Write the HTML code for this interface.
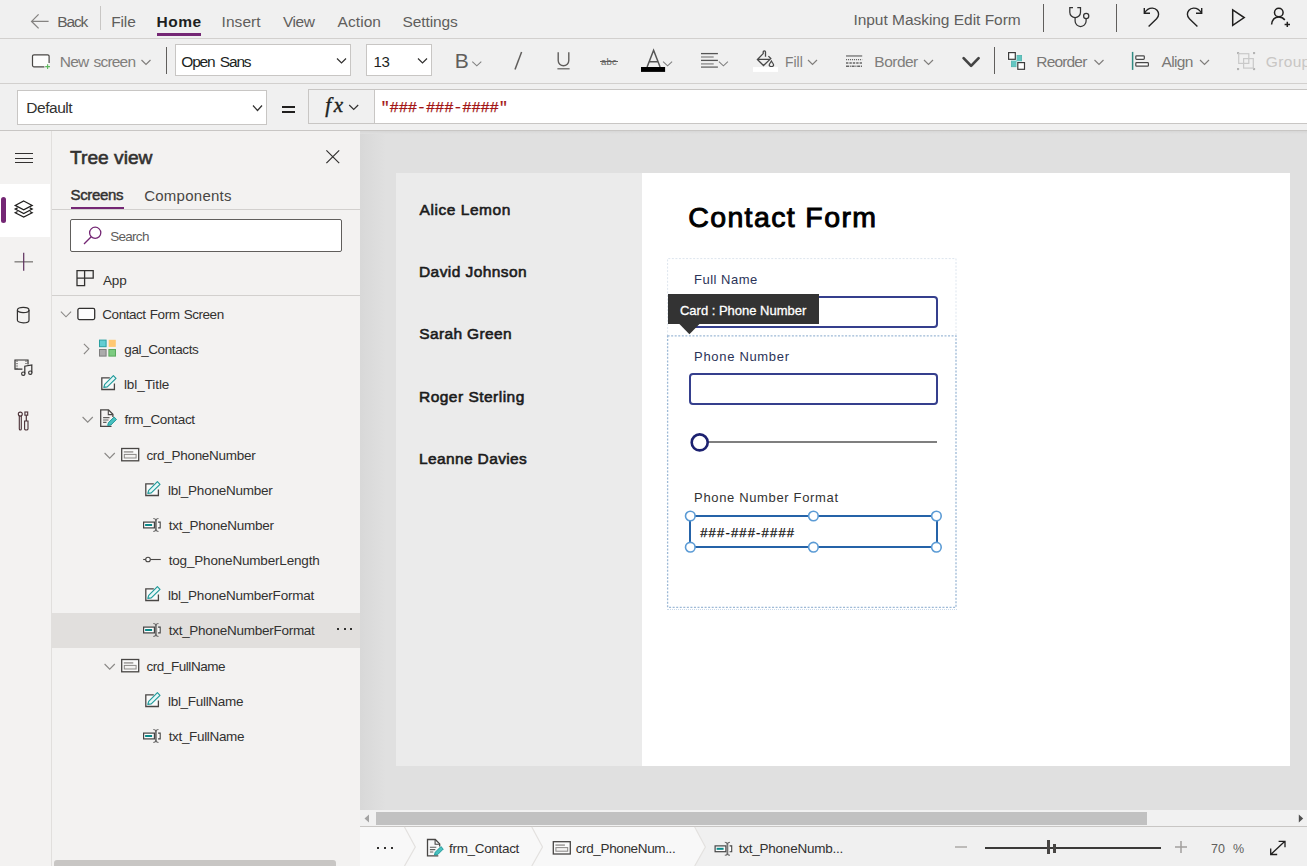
<!DOCTYPE html>
<html>
<head>
<meta charset="utf-8">
<title>Power Apps</title>
<style>
*{box-sizing:border-box;margin:0;padding:0}
html,body{width:1307px;height:866px;overflow:hidden;background:#f3f2f1;font-family:"Liberation Sans",sans-serif;color:#605e5c}
#root{position:relative;width:1307px;height:866px;overflow:hidden;background:#f3f2f1}
.abs{position:absolute}
.t{position:absolute;white-space:nowrap;line-height:1;display:block}
svg{position:absolute;overflow:visible}
.hl{position:absolute;height:1px;background:#d2d0ce}
.vl{position:absolute;width:1px;background:#8a8886}
</style>
</head>
<body>
<div id="root">

<!-- top bars -->
<div class="abs" style="left:0;top:0;width:1307px;height:38px;background:#f0f0f0"></div>
<div class="hl" style="left:0;top:38px;width:1307px"></div>
<svg style="left:30px;top:13px" width="21" height="17" viewBox="0 0 21 17"><path d="M18.6 8.4 H1.6 M8.6 1.4 L1.6 8.4 L8.6 15.4" fill="none" stroke="#858381" stroke-width="1.3"/></svg>
<span class="t" style="left:57.3px;top:14px;font-size:15.5px;line-height:15.5px;color:#605e5c;letter-spacing:-1.15px;">Back</span>
<div class="vl" style="left:100px;top:6px;height:24px;background:#c8c6c4"></div>
<span class="t" style="left:111.3px;top:14px;font-size:15.5px;line-height:15.5px;color:#605e5c;letter-spacing:-0.17px;">File</span>
<span class="t" style="left:156.5px;top:14px;font-size:15.5px;line-height:15.5px;color:#201f1e;font-weight:700;letter-spacing:0.51px;">Home</span>
<div class="abs" style="left:157px;top:33px;width:44px;height:2.5px;background:#742774"></div>
<span class="t" style="left:221.6px;top:14px;font-size:15.5px;line-height:15.5px;color:#605e5c;letter-spacing:0.04px;">Insert</span>
<span class="t" style="left:282.9px;top:14px;font-size:15.5px;line-height:15.5px;color:#605e5c;letter-spacing:-0.42px;">View</span>
<span class="t" style="left:337.5px;top:14px;font-size:15.5px;line-height:15.5px;color:#605e5c;letter-spacing:0.08px;">Action</span>
<span class="t" style="left:402.6px;top:14px;font-size:15.5px;line-height:15.5px;color:#605e5c;letter-spacing:-0.11px;">Settings</span>
<span class="t" style="left:853.4px;top:12px;font-size:15.5px;line-height:15.5px;color:#605e5c;letter-spacing:-0.04px;word-spacing:0.08px;">Input Masking Edit Form</span>
<div class="vl" style="left:1043px;top:4px;height:28px;background:#605e5c"></div>
<div class="vl" style="left:1116px;top:4px;height:28px;background:#605e5c"></div>
<svg style="left:1067px;top:6px" width="25" height="24" viewBox="0 0 25 24"><path d="M6 1.5 H2.8 V6.2 A5.35 5.35 0 0 0 13.5 6.2 V1.5 H10.3" fill="none" stroke="#333" stroke-width="1.25"/><path d="M8.1 11.6 V15 A5.5 5.5 0 0 0 19.1 15 V12.8" fill="none" stroke="#333" stroke-width="1.25"/><circle cx="19.2" cy="10" r="2.6" fill="none" stroke="#333" stroke-width="1.25"/></svg>
<svg style="left:1142px;top:6px" width="21" height="24" viewBox="0 0 21 24"><path d="M2.3 2.1 V7.3 H8" fill="none" stroke="#222" stroke-width="1.4"/><path d="M2.6 7 C4.5 3.5 8 2 10.5 2.1 C14.5 2.3 16.6 5.5 16.6 8.3 C16.6 10.2 15.8 11.6 14.6 12.7 L6.6 20.5" fill="none" stroke="#222" stroke-width="1.4"/></svg>
<svg style="left:1185px;top:6px" width="21" height="24" viewBox="0 0 21 24"><path d="M16.7 2.1 V7.3 H11" fill="none" stroke="#222" stroke-width="1.4"/><path d="M16.4 7 C14.5 3.5 11 2 8.5 2.1 C4.5 2.3 2.4 5.5 2.4 8.3 C2.4 10.2 3.2 11.6 4.4 12.7 L12.4 20.5" fill="none" stroke="#222" stroke-width="1.4"/></svg>
<svg style="left:1231px;top:8px" width="17" height="21" viewBox="0 0 17 21"><path d="M1.7 1.8 V17.4 L13.2 9.6 Z" fill="none" stroke="#201f1e" stroke-width="1.5" stroke-linejoin="miter"/></svg>
<svg style="left:1270px;top:6px" width="23" height="24" viewBox="0 0 23 24"><circle cx="8.8" cy="6.5" r="4.3" fill="none" stroke="#201f1e" stroke-width="1.5"/><path d="M1.6 18.5 C2.2 13.2 5.5 11 8.8 11 C11.5 11 13.5 12.2 14.8 14" fill="none" stroke="#201f1e" stroke-width="1.5"/><path d="M14.6 18.4 H20 M17.3 15.7 V21.1" fill="none" stroke="#201f1e" stroke-width="1.5"/></svg>
<div class="abs" style="left:0;top:39px;width:1307px;height:44px;background:#f0f0f0"></div>
<div class="hl" style="left:0;top:83px;width:1307px"></div>
<svg style="left:31px;top:53px" width="23" height="18" viewBox="0 0 23 18"><path d="M14.2 13.8 H3 A1.5 1.5 0 0 1 1.5 12.3 V3.3 A1.5 1.5 0 0 1 3 1.8 H16.6 A1.5 1.5 0 0 1 18.1 3.3 V10.4 L14.2 13.8" fill="#fcfcfc" stroke="none"/><path d="M13.4 13.8 H3 A1.5 1.5 0 0 1 1.5 12.3 V3.3 A1.5 1.5 0 0 1 3 1.8 H16.6 A1.5 1.5 0 0 1 18.1 3.3 V10" fill="none" stroke="#484644" stroke-width="1.2"/><path d="M14.2 13.6 H19 M16.6 11.2 V16" fill="none" stroke="#5cb85c" stroke-width="1.1"/></svg>
<span class="t" style="left:59.8px;top:54px;font-size:15.5px;line-height:15.5px;color:#807e7c;letter-spacing:-0.80px;word-spacing:1.60px;">New screen</span>
<svg style="left:141px;top:59px" width="11" height="7" viewBox="0 0 11 7"><g transform="translate(0 0.5)"><path d="M0.5 0.5 L5.0 5 L9.5 0.5" fill="none" stroke="#807e7c" stroke-width="1.2"/></g></svg>
<div class="vl" style="left:166px;top:47px;height:27px;background:#605e5c"></div>
<div class="abs" style="left:175px;top:44px;width:176px;height:32px;background:#fff;border:1px solid #c8c6c4"></div>
<span class="t" style="left:181.3px;top:54px;font-size:15.5px;line-height:15.5px;color:#201f1e;letter-spacing:-1.22px;word-spacing:2.45px;">Open Sans</span>
<svg style="left:336px;top:58px" width="11" height="7" viewBox="0 0 11 7"><g transform="translate(0.5 0)"><path d="M0.5 0.5 L5.0 5 L9.5 0.5" fill="none" stroke="#323130" stroke-width="1.2"/></g></svg>
<div class="abs" style="left:366px;top:44px;width:66px;height:32px;background:#fff;border:1px solid #c8c6c4"></div>
<span class="t" style="left:373.4px;top:54px;font-size:15px;line-height:15px;color:#201f1e;letter-spacing:-0.33px;">13</span>
<svg style="left:417px;top:58px" width="11" height="7" viewBox="0 0 11 7"><g transform="translate(0.5 0)"><path d="M0.5 0.5 L5.0 5 L9.5 0.5" fill="none" stroke="#323130" stroke-width="1.2"/></g></svg>
<span class="t" style="left:454.8px;top:50px;font-size:21px;line-height:21px;color:#605e5c;">B</span>
<svg style="left:471px;top:61px" width="11" height="7" viewBox="0 0 11 7"><g transform="translate(0.8 0.2)"><path d="M0.5 0.5 L5.0 4.6 L9.5 0.5" fill="none" stroke="#808080" stroke-width="1.1"/></g></svg>
<svg style="left:513px;top:51px" width="13" height="21" viewBox="0 0 13 21"><path d="M8.6 1 L2 18.5" stroke="#605e5c" stroke-width="1.5" fill="none"/></svg>
<svg style="left:556px;top:51px" width="17" height="21" viewBox="0 0 17 21"><path d="M2.2 1.2 V9.5 A5.3 5.3 0 0 0 12.8 9.5 V1.2" fill="none" stroke="#605e5c" stroke-width="1.4"/><path d="M1.4 17.8 H13.6" stroke="#605e5c" stroke-width="1.2"/></svg>
<span class="t" style="left:601.1px;top:57px;font-size:9.5px;line-height:9.5px;color:#605e5c;letter-spacing:0.16px;">abc</span>
<div class="abs" style="left:600px;top:61px;width:18px;height:1px;background:#605e5c"></div>
<svg style="left:640px;top:49px" width="27" height="25" viewBox="0 0 27 25"><path d="M7.1 18 L13.6 1.3 L20.1 18 M9.3 12.7 H17.9" fill="none" stroke="#555" stroke-width="1.5" stroke-linejoin="miter"/><rect x="1" y="18" width="24.1" height="4.9" fill="#000"/></svg>
<svg style="left:662px;top:61px" width="11" height="7" viewBox="0 0 11 7"><g transform="translate(0.6 0.2)"><path d="M0.5 0.5 L5.0 4.6 L9.5 0.5" fill="none" stroke="#808080" stroke-width="1.1"/></g></svg>
<svg style="left:701px;top:52px" width="19" height="18" viewBox="0 0 19 18"><rect x="0" y="0.95" width="16.9" height="1.3" fill="#555"/><rect x="0" y="4.35" width="12.7" height="1.3" fill="#888"/><rect x="0" y="7.75" width="16.9" height="1.3" fill="#555"/><rect x="0" y="11.25" width="12.7" height="1.3" fill="#888"/><rect x="0" y="14.45" width="16.9" height="1.3" fill="#666"/></svg>
<svg style="left:718px;top:61px" width="11" height="7" viewBox="0 0 11 7"><g transform="translate(0.4 0.2)"><path d="M0.5 0.5 L5.0 4.6 L9.5 0.5" fill="none" stroke="#808080" stroke-width="1.1"/></g></svg>
<svg style="left:753px;top:49px" width="27" height="25" viewBox="0 0 27 25"><path d="M12.5 7.8 V3 A1.15 1.15 0 0 0 10.2 3 V4.6 L4.4 10.5 L10.5 16.5 L17.8 9.6 L15.4 7.1 M4.6 10.4 H17" fill="none" stroke="#484848" stroke-width="1.3" stroke-linejoin="miter"/><path d="M18.4 12 C17.4 13.8 16.2 15.1 16.2 16 A2.2 1.5 0 0 0 20.6 16 C20.6 15.1 19.4 13.8 18.4 12 Z" fill="none" stroke="#484848" stroke-width="1.2"/><rect x="0" y="18.1" width="25" height="4.8" fill="#fff"/></svg>
<span class="t" style="left:784.9px;top:54px;font-size:15.5px;line-height:15.5px;color:#807e7c;transform:scaleX(0.896);transform-origin:0 0;">Fill</span>
<svg style="left:807px;top:59px" width="11" height="7" viewBox="0 0 11 7"><g transform="translate(0.5 0.5)"><path d="M0.5 0.5 L5.0 5 L9.5 0.5" fill="none" stroke="#807e7c" stroke-width="1.2"/></g></svg>
<svg style="left:845px;top:54px" width="20" height="15" viewBox="0 0 20 15"><rect x="1" y="1.1" width="16.2" height="1.7" fill="#8f8f8f"/><path d="M1 5.7 H17.2" stroke="#666" stroke-width="1.3" stroke-dasharray="1.1 0.9"/><path d="M1 9 H17.2" stroke="#666" stroke-width="1.4" stroke-dasharray="2.4 1"/><path d="M1 12.3 H17.2" stroke="#666" stroke-width="1.4" stroke-dasharray="3 0.8 1 0.8"/></svg>
<span class="t" style="left:874.3px;top:54px;font-size:15.5px;line-height:15.5px;color:#807e7c;letter-spacing:-0.51px;">Border</span>
<svg style="left:923px;top:59px" width="11" height="7" viewBox="0 0 11 7"><g transform="translate(0.5 0.5)"><path d="M0.5 0.5 L5.0 5 L9.5 0.5" fill="none" stroke="#807e7c" stroke-width="1.2"/></g></svg>
<svg style="left:961px;top:55px" width="21" height="15" viewBox="0 0 21 15"><path d="M2.6 3.1 L10.1 10.9 L17.6 3.1" fill="none" stroke="#444" stroke-width="2.7" stroke-linecap="round" stroke-linejoin="round"/></svg>
<div class="vl" style="left:994px;top:47px;height:27px;background:#605e5c"></div>
<svg style="left:1007px;top:51px" width="21" height="21" viewBox="0 0 21 21"><rect x="4.4" y="4.4" width="10.2" height="11.3" fill="#62c6c1" stroke="#4fb5af" stroke-width="0.8"/><rect x="0.3" y="0.3" width="9.3" height="9.3" fill="#f5f5f5"/><rect x="9.5" y="10.3" width="9.3" height="9.3" fill="#f5f5f5"/><rect x="1.6" y="1.6" width="6.7" height="6.7" fill="#fff" stroke="#3b3b3b" stroke-width="1.2"/><rect x="10.8" y="11.6" width="6.7" height="6.7" fill="#fff" stroke="#3b3b3b" stroke-width="1.2"/></svg>
<span class="t" style="left:1036.3px;top:54px;font-size:15.5px;line-height:15.5px;color:#7a7876;letter-spacing:-0.83px;">Reorder</span>
<svg style="left:1094px;top:59px" width="11" height="7" viewBox="0 0 11 7"><g transform="translate(0 0.5)"><path d="M0.5 0.5 L5.0 5 L9.5 0.5" fill="none" stroke="#807e7c" stroke-width="1.2"/></g></svg>
<svg style="left:1131px;top:51px" width="21" height="21" viewBox="0 0 21 21"><path d="M1.6 0.9 V18.9" stroke="#2f8a82" stroke-width="1.5"/><rect x="4.8" y="4.8" width="8.5" height="3.5" rx="0.8" fill="#fff" stroke="#484848" stroke-width="1.2"/><rect x="4.8" y="11.7" width="12.6" height="3.5" rx="0.8" fill="#fff" stroke="#484848" stroke-width="1.2"/></svg>
<span class="t" style="left:1161.5px;top:54px;font-size:15.5px;line-height:15.5px;color:#7a7876;letter-spacing:-0.62px;">Align</span>
<svg style="left:1199px;top:59px" width="11" height="7" viewBox="0 0 11 7"><g transform="translate(0.5 0.5)"><path d="M0.5 0.5 L5.0 5 L9.5 0.5" fill="none" stroke="#807e7c" stroke-width="1.2"/></g></svg>
<svg style="left:1236px;top:51px" width="21" height="21" viewBox="0 0 21 21"><rect x="1" y="1" width="2.1" height="2.1" fill="#b4b4b4"/><rect x="17" y="1" width="2.1" height="2.1" fill="#b4b4b4"/><rect x="1" y="17" width="2.1" height="2.1" fill="#b4b4b4"/><rect x="17" y="17" width="2.1" height="2.1" fill="#b4b4b4"/><rect x="2.7" y="2.7" width="10.1" height="9.7" fill="none" stroke="#c9c9c9" stroke-width="1.2"/><rect x="7.6" y="7.6" width="9.7" height="9.5" fill="none" stroke="#c9c9c9" stroke-width="1.2"/></svg>
<span class="t" style="left:1265.8px;top:54px;font-size:15.5px;line-height:15.5px;color:#c8c6c4;letter-spacing:0.33px;">Group</span>
<div class="abs" style="left:0;top:84px;width:1307px;height:46px;background:#f0f0f0"></div>
<div class="hl" style="left:0;top:130px;width:1307px;background:#c8c6c4"></div>
<div class="abs" style="left:17px;top:90px;width:250px;height:35px;background:#fff;border:1px solid #c8c6c4"></div>
<span class="t" style="left:26.3px;top:100px;font-size:15.5px;line-height:15.5px;color:#323130;letter-spacing:-0.46px;">Default</span>
<svg style="left:252px;top:105px" width="11" height="8" viewBox="0 0 11 8"><g transform="translate(0.5 0)"><path d="M0.5 0.5 L5.0 5.5 L9.5 0.5" fill="none" stroke="#323130" stroke-width="1.2"/></g></svg>
<div class="abs" style="left:282px;top:105.5px;width:12.5px;height:2px;background:#201f1e"></div>
<div class="abs" style="left:282px;top:111px;width:12.5px;height:2px;background:#201f1e"></div>
<div class="abs" style="left:308px;top:89px;width:999px;height:35px;background:#fff;border:1px solid #c8c6c4;border-right:none"></div>
<div class="abs" style="left:309px;top:90px;width:66px;height:33px;background:#f0f0f0;border-right:1px solid #c8c6c4"></div>
<span class="t" style="left:325.3px;top:95px;font-size:21px;line-height:21px;color:#201f1e;font-style:italic;font-family:'Liberation Serif',serif;letter-spacing:2.70px;-webkit-text-stroke:0.4px #201f1e;">fx</span>
<svg style="left:348px;top:104px" width="11" height="7" viewBox="0 0 11 7"><g transform="translate(0.7 0.5)"><path d="M0.5 0.5 L5.0 5 L9.5 0.5" fill="none" stroke="#323130" stroke-width="1.2"/></g></svg>
<span class="t" style="left:380.5px;top:101px;font-size:15.5px;line-height:15.5px;color:#a31515;font-family:'Liberation Mono',monospace;letter-spacing:-0.21px;-webkit-text-stroke:0.25px #a31515;">"###-###-####"</span>
<!-- left rail and tree view -->
<div class="abs" style="left:0;top:131px;width:52px;height:735px;background:#f3f2f1"></div>
<div class="abs" style="left:51px;top:131px;width:1px;height:735px;background:#e1dfdd"></div>
<div class="abs" style="left:14.5px;top:153px;width:18.5px;height:1.2px;background:#323130"></div>
<div class="abs" style="left:14.5px;top:157.5px;width:18.5px;height:1.2px;background:#323130"></div>
<div class="abs" style="left:14.5px;top:162px;width:18.5px;height:1.2px;background:#323130"></div>
<div class="abs" style="left:0px;top:184px;width:50px;height:53px;background:#fff"></div>
<div class="abs" style="left:1px;top:197px;width:5px;height:26px;background:#742774;border-radius:2.5px"></div>
<svg style="left:14px;top:200px" width="21" height="19" viewBox="0 0 21 19"><path d="M9.7 1 L18.2 5.4 L9.7 9.8 L1.2 5.4 Z" fill="none" stroke="#201f1e" stroke-width="1.2" stroke-linejoin="miter"/><path d="M3.6 7.9 L1.2 9.1 L9.7 13.5 L18.2 9.1 L15.8 7.9" fill="none" stroke="#201f1e" stroke-width="1.2"/><path d="M3.6 11.5 L1.2 12.7 L9.7 17.1 L18.2 12.7 L15.8 11.5" fill="none" stroke="#201f1e" stroke-width="1.2"/></svg>
<svg style="left:14px;top:252px" width="21" height="21" viewBox="0 0 21 21"><path d="M0.5 9.8 H19" stroke="#8a8886" stroke-width="1.5" fill="none"/><path d="M9.7 0.8 V18.8" stroke="#5c2e5c" stroke-width="1.2" fill="none"/></svg>
<svg style="left:16px;top:306px" width="16" height="20" viewBox="0 0 16 20"><ellipse cx="7.2" cy="4" rx="5.8" ry="2.6" fill="none" stroke="#323130" stroke-width="1.2"/><path d="M1.4 4 V14.2 A5.8 2.6 0 0 0 13 14.2 V4" fill="none" stroke="#323130" stroke-width="1.2"/></svg>
<svg style="left:14px;top:359px" width="21" height="19" viewBox="0 0 21 19"><path d="M8.4 10.2 H1 V1 H14 V5.4" fill="none" stroke="#323130" stroke-width="1.2"/><path d="M3 1.6 V9.8 M12 1.6 V5" stroke="#323130" stroke-width="1" stroke-dasharray="1.2 1.2"/><path d="M10.8 14.4 V7.2 L17.8 6 V13.4" fill="none" stroke="#323130" stroke-width="1.2"/><circle cx="9.3" cy="14.7" r="1.7" fill="none" stroke="#323130" stroke-width="1.1"/><circle cx="16.3" cy="13.7" r="1.7" fill="none" stroke="#323130" stroke-width="1.1"/></svg>
<svg style="left:17px;top:411px" width="14" height="21" viewBox="0 0 14 21"><circle cx="3.3" cy="3.1" r="2" fill="none" stroke="#4a3036" stroke-width="1.1"/><path d="M2.3 5 V18 A1 1 0 0 0 4.3 18 V5" fill="none" stroke="#4a3036" stroke-width="1.1"/><rect x="7.9" y="1" width="2.8" height="3.2" fill="none" stroke="#4a3036" stroke-width="1.1"/><path d="M9.3 4.2 V10" stroke="#4a3036" stroke-width="1.2"/><path d="M7.6 10 H11 V18 A1.7 1 0 0 1 7.6 18 Z" fill="none" stroke="#4a3036" stroke-width="1.1"/></svg>
<div class="abs" style="left:52px;top:131px;width:308px;height:735px;background:#f3f2f1"></div>
<span class="t" style="left:70.0px;top:148px;font-size:19.2px;line-height:19.2px;color:#323130;-webkit-text-stroke:0.6px #323130;">Tree view</span>
<svg style="left:325px;top:149px" width="17" height="17" viewBox="0 0 17 17"><path d="M1.4 1.4 L14.2 14.2 M14.2 1.4 L1.4 14.2" stroke="#323130" stroke-width="1.2" fill="none"/></svg>
<span class="t" style="left:70.5px;top:187px;font-size:15px;line-height:15px;color:#323130;letter-spacing:-0.34px;-webkit-text-stroke:0.45px #323130;">Screens</span>
<div class="abs" style="left:70.5px;top:207px;width:53px;height:2.2px;background:#742774"></div>
<span class="t" style="left:144.2px;top:188px;font-size:15px;line-height:15px;color:#484644;letter-spacing:0.25px;">Components</span>
<div class="hl" style="left:52px;top:209px;width:308px;background:#d2d0ce"></div>
<div class="abs" style="left:70px;top:219px;width:272px;height:33px;background:#fff;border:1px solid #605e5c;border-radius:2px"></div>
<svg style="left:83px;top:226px" width="21" height="20" viewBox="0 0 21 20"><circle cx="12.2" cy="6.8" r="5.6" fill="none" stroke="#742774" stroke-width="1.3"/><path d="M8.2 10.8 L1 18" stroke="#742774" stroke-width="1.3"/></svg>
<span class="t" style="left:110.2px;top:230px;font-size:13.5px;line-height:13.5px;color:#605e5c;letter-spacing:-0.71px;">Search</span>
<svg style="left:76px;top:270px" width="20" height="18" viewBox="0 0 20 18"><path d="M1 0.7 H17.2 V8.2 H8.6 V15.6 H1 Z M8.6 0.7 V8.2 M1 8.2 H8.6" fill="none" stroke="#323130" stroke-width="1.3"/></svg>
<span class="t" style="left:103.0px;top:274px;font-size:13.5px;line-height:13.5px;color:#323130;letter-spacing:-0.14px;">App</span>
<div class="hl" style="left:52px;top:295px;width:308px;background:#d2d0ce"></div>
<svg style="left:60px;top:311px" width="13" height="8" viewBox="0 0 13 8"><g transform="translate(0.3 0)"><path d="M0.6 0.6 L5.7 5.8 L10.8 0.6" fill="none" stroke="#8a8886" stroke-width="1.1"/></g></svg>
<svg style="left:77px;top:307px" width="20" height="15" viewBox="0 0 20 15"><rect x="0.9" y="1.4" width="16.8" height="11.2" rx="1.5" fill="#fdfdfd" stroke="#323130" stroke-width="1.3"/></svg>
<span class="t" style="left:102.3px;top:308px;font-size:13.5px;line-height:13.5px;color:#323130;letter-spacing:-0.46px;word-spacing:0.92px;">Contact Form Screen</span>
<svg style="left:83px;top:343px" width="8" height="13" viewBox="0 0 8 13"><g transform="translate(0.3 0.2)"><path d="M0.6 0.6 L5.6 5.6 L0.6 10.8" fill="none" stroke="#8a8886" stroke-width="1.1"/></g></svg>
<svg style="left:98px;top:339px" width="19" height="19" viewBox="0 0 19 19"><g transform="translate(0.8 0.4)"><rect x="0.7" y="0.7" width="6.6" height="6.6" fill="#62cdd2" stroke="#2aa0a0" stroke-width="1"/><rect x="9.9" y="0.4" width="7.1" height="7.1" fill="#ffc871"/><rect x="0.7" y="10.1" width="6.6" height="6.6" fill="#ababab" stroke="#7d7d7d" stroke-width="1"/><rect x="10.1" y="10.1" width="6.6" height="6.6" fill="#7ccb80" stroke="#5aa85d" stroke-width="1"/></g></svg>
<span class="t" style="left:124.3px;top:343px;font-size:13.5px;line-height:13.5px;color:#323130;letter-spacing:-0.39px;">gal_Contacts</span>
<svg style="left:100px;top:374px" width="18" height="18" viewBox="0 0 18 18"><g transform="translate(0 0.8)"><path d="M9.8 3.1 H1.8 V14.7 H14.4 V8.8 L9.8 3.1" fill="#fafafa" stroke="none"/><path d="M9.8 3.1 H1.8 V14.7 H14.4 V8.8" fill="none" stroke="#484644" stroke-width="1.3"/><path d="M3.8 12.6 L4.7 9.5 L13.4 0.9 L16 3.5 L7.3 12.1 Z" fill="#e6f7f7" stroke="#1f9a9a" stroke-width="1.15" stroke-linejoin="round"/></g></svg>
<span class="t" style="left:123.9px;top:378px;font-size:13.5px;line-height:13.5px;color:#323130;letter-spacing:-0.07px;">lbl_Title</span>
<svg style="left:82px;top:416px" width="13" height="8" viewBox="0 0 13 8"><g transform="translate(0 0.4)"><path d="M0.6 0.6 L5.7 5.8 L10.8 0.6" fill="none" stroke="#8a8886" stroke-width="1.1"/></g></svg>
<svg style="left:99px;top:409px" width="20" height="20" viewBox="0 0 20 20"><g transform="translate(0.5 0)"><path d="M12 17.3 H1.2 V0.9 H9 L13.4 5.3 V8" fill="none" stroke="#484644" stroke-width="1.3"/><path d="M8.8 1 V5.6 H13.2" fill="none" stroke="#484644" stroke-width="1.1"/><path d="M3.6 8.6 H10 M3.6 11 H9 M3.6 13.4 H7" stroke="#605e5c" stroke-width="1.1"/><path d="M8.2 16.4 L9 13.6 L14.6 8 L17 10.4 L11.4 16 Z" fill="#49c0c0" stroke="#1f9a9a" stroke-width="1" stroke-linejoin="round"/></g></svg>
<span class="t" style="left:124.6px;top:413px;font-size:13.5px;line-height:13.5px;color:#323130;letter-spacing:-0.30px;">frm_Contact</span>
<svg style="left:104px;top:452px" width="13" height="8" viewBox="0 0 13 8"><g transform="translate(0 0.4)"><path d="M0.6 0.6 L5.7 5.8 L10.8 0.6" fill="none" stroke="#8a8886" stroke-width="1.1"/></g></svg>
<svg style="left:121px;top:447px" width="20" height="15" viewBox="0 0 20 15"><g transform="translate(0 0.8)"><rect x="0.7" y="0.7" width="17" height="12.3" fill="#fafafa" stroke="#484644" stroke-width="1.3"/><rect x="2.8" y="3.3" width="9.5" height="1.6" fill="#a19f9d"/><rect x="3.3" y="6.6" width="11.8" height="3.6" fill="#f3f2f1" stroke="#8a8886" stroke-width="1"/></g></svg>
<span class="t" style="left:146.4px;top:449px;font-size:13.5px;line-height:13.5px;color:#323130;letter-spacing:-0.29px;">crd_PhoneNumber</span>
<svg style="left:144px;top:480px" width="18" height="18" viewBox="0 0 18 18"><g transform="translate(0 0.8)"><path d="M9.8 3.1 H1.8 V14.7 H14.4 V8.8 L9.8 3.1" fill="#fafafa" stroke="none"/><path d="M9.8 3.1 H1.8 V14.7 H14.4 V8.8" fill="none" stroke="#484644" stroke-width="1.3"/><path d="M3.8 12.6 L4.7 9.5 L13.4 0.9 L16 3.5 L7.3 12.1 Z" fill="#e6f7f7" stroke="#1f9a9a" stroke-width="1.15" stroke-linejoin="round"/></g></svg>
<span class="t" style="left:168.0px;top:484px;font-size:13.5px;line-height:13.5px;color:#323130;letter-spacing:-0.23px;">lbl_PhoneNumber</span>
<svg style="left:143px;top:517px" width="20" height="15" viewBox="0 0 20 15"><g transform="translate(0 0.5)"><rect x="0.6" y="4.6" width="10.8" height="5.8" fill="#fdfdfd" stroke="#444" stroke-width="1.2"/><rect x="2.1" y="6.5" width="7" height="2" fill="#0a8a8a"/><path d="M15.1 4.6 H17.2 V10.4 H15.1" fill="#fdfdfd" stroke="#444" stroke-width="1.1"/><path d="M12.9 1.6 V13.4" stroke="#777" stroke-width="1.8" fill="none"/><path d="M10.3 1 Q12.3 1.1 12.9 2.4 Q13.5 1.1 15.5 1 M10.3 14 Q12.3 13.9 12.9 12.6 Q13.5 13.9 15.5 14" stroke="#666" stroke-width="1.1" fill="none"/></g></svg>
<span class="t" style="left:168.7px;top:519px;font-size:13.5px;line-height:13.5px;color:#323130;letter-spacing:-0.25px;">txt_PhoneNumber</span>
<svg style="left:143px;top:555px" width="20" height="9" viewBox="0 0 20 9"><g transform="translate(0 0.5)"><path d="M0.2 4 H17.8" stroke="#484644" stroke-width="1.1"/><circle cx="5" cy="4" r="2.3" fill="#fdfdfd" stroke="#484644" stroke-width="1.1"/></g></svg>
<span class="t" style="left:168.7px;top:554px;font-size:13.5px;line-height:13.5px;color:#323130;letter-spacing:-0.18px;">tog_PhoneNumberLength</span>
<svg style="left:144px;top:585px" width="18" height="18" viewBox="0 0 18 18"><g transform="translate(0 0.8)"><path d="M9.8 3.1 H1.8 V14.7 H14.4 V8.8 L9.8 3.1" fill="#fafafa" stroke="none"/><path d="M9.8 3.1 H1.8 V14.7 H14.4 V8.8" fill="none" stroke="#484644" stroke-width="1.3"/><path d="M3.8 12.6 L4.7 9.5 L13.4 0.9 L16 3.5 L7.3 12.1 Z" fill="#e6f7f7" stroke="#1f9a9a" stroke-width="1.15" stroke-linejoin="round"/></g></svg>
<span class="t" style="left:168.0px;top:589px;font-size:13.5px;line-height:13.5px;color:#323130;letter-spacing:-0.23px;">lbl_PhoneNumberFormat</span>
<div class="abs" style="left:52px;top:613px;width:308px;height:35px;background:#e1dfdd"></div>
<svg style="left:143px;top:622px" width="20" height="15" viewBox="0 0 20 15"><g transform="translate(0 0.5)"><rect x="0.6" y="4.6" width="10.8" height="5.8" fill="#fdfdfd" stroke="#444" stroke-width="1.2"/><rect x="2.1" y="6.5" width="7" height="2" fill="#0a8a8a"/><path d="M15.1 4.6 H17.2 V10.4 H15.1" fill="#fdfdfd" stroke="#444" stroke-width="1.1"/><path d="M12.9 1.6 V13.4" stroke="#777" stroke-width="1.8" fill="none"/><path d="M10.3 1 Q12.3 1.1 12.9 2.4 Q13.5 1.1 15.5 1 M10.3 14 Q12.3 13.9 12.9 12.6 Q13.5 13.9 15.5 14" stroke="#666" stroke-width="1.1" fill="none"/></g></svg>
<span class="t" style="left:168.7px;top:624px;font-size:13.5px;line-height:13.5px;color:#323130;letter-spacing:-0.27px;">txt_PhoneNumberFormat</span>
<div class="abs" style="left:337px;top:627.5px;width:2px;height:2px;background:#323130"></div>
<div class="abs" style="left:343.5px;top:627.5px;width:2px;height:2px;background:#323130"></div>
<div class="abs" style="left:350px;top:627.5px;width:2px;height:2px;background:#323130"></div>
<svg style="left:104px;top:663px" width="13" height="8" viewBox="0 0 13 8"><g transform="translate(0 0.4)"><path d="M0.6 0.6 L5.7 5.8 L10.8 0.6" fill="none" stroke="#8a8886" stroke-width="1.1"/></g></svg>
<svg style="left:121px;top:658px" width="20" height="15" viewBox="0 0 20 15"><g transform="translate(0 0.8)"><rect x="0.7" y="0.7" width="17" height="12.3" fill="#fafafa" stroke="#484644" stroke-width="1.3"/><rect x="2.8" y="3.3" width="9.5" height="1.6" fill="#a19f9d"/><rect x="3.3" y="6.6" width="11.8" height="3.6" fill="#f3f2f1" stroke="#8a8886" stroke-width="1"/></g></svg>
<span class="t" style="left:146.4px;top:660px;font-size:13.5px;line-height:13.5px;color:#323130;letter-spacing:-0.44px;">crd_FullName</span>
<svg style="left:144px;top:691px" width="18" height="18" viewBox="0 0 18 18"><g transform="translate(0 0.8)"><path d="M9.8 3.1 H1.8 V14.7 H14.4 V8.8 L9.8 3.1" fill="#fafafa" stroke="none"/><path d="M9.8 3.1 H1.8 V14.7 H14.4 V8.8" fill="none" stroke="#484644" stroke-width="1.3"/><path d="M3.8 12.6 L4.7 9.5 L13.4 0.9 L16 3.5 L7.3 12.1 Z" fill="#e6f7f7" stroke="#1f9a9a" stroke-width="1.15" stroke-linejoin="round"/></g></svg>
<span class="t" style="left:168.0px;top:695px;font-size:13.5px;line-height:13.5px;color:#323130;letter-spacing:-0.30px;">lbl_FullName</span>
<svg style="left:143px;top:728px" width="20" height="15" viewBox="0 0 20 15"><g transform="translate(0 0.5)"><rect x="0.6" y="4.6" width="10.8" height="5.8" fill="#fdfdfd" stroke="#444" stroke-width="1.2"/><rect x="2.1" y="6.5" width="7" height="2" fill="#0a8a8a"/><path d="M15.1 4.6 H17.2 V10.4 H15.1" fill="#fdfdfd" stroke="#444" stroke-width="1.1"/><path d="M12.9 1.6 V13.4" stroke="#777" stroke-width="1.8" fill="none"/><path d="M10.3 1 Q12.3 1.1 12.9 2.4 Q13.5 1.1 15.5 1 M10.3 14 Q12.3 13.9 12.9 12.6 Q13.5 13.9 15.5 14" stroke="#666" stroke-width="1.1" fill="none"/></g></svg>
<span class="t" style="left:168.7px;top:730px;font-size:13.5px;line-height:13.5px;color:#323130;letter-spacing:-0.34px;">txt_FullName</span>
<div class="abs" style="left:54px;top:860px;width:282px;height:6px;background:#c8c6c4;border-radius:3px 3px 0 0"></div>
<!-- canvas -->
<div class="abs" style="left:360px;top:131px;width:947px;height:679px;background:#e0e0e0"></div>
<div class="abs" style="left:360px;top:131px;width:26px;height:679px;background:linear-gradient(90deg,#d8d8d8,#e0e0e0)"></div>
<div class="abs" style="left:360px;top:131px;width:947px;height:3px;background:linear-gradient(180deg,#d6d6d6,#e0e0e0)"></div>
<div class="abs" style="left:396px;top:173px;width:894px;height:593px;background:#fff"></div>
<div class="abs" style="left:396px;top:173px;width:246px;height:593px;background:#ebebeb"></div>
<span class="t" style="left:419.6px;top:202px;font-size:15.5px;line-height:15.5px;color:#1b1b1b;letter-spacing:0.54px;-webkit-text-stroke:0.6px #1b1b1b;">Alice Lemon</span>
<span class="t" style="left:419.0px;top:264px;font-size:15.5px;line-height:15.5px;color:#1b1b1b;letter-spacing:0.43px;-webkit-text-stroke:0.6px #1b1b1b;">David Johnson</span>
<span class="t" style="left:419.2px;top:326px;font-size:15.5px;line-height:15.5px;color:#1b1b1b;letter-spacing:0.37px;-webkit-text-stroke:0.6px #1b1b1b;">Sarah Green</span>
<span class="t" style="left:419.0px;top:389px;font-size:15.5px;line-height:15.5px;color:#1b1b1b;letter-spacing:0.48px;-webkit-text-stroke:0.6px #1b1b1b;">Roger Sterling</span>
<span class="t" style="left:419.0px;top:451px;font-size:15.5px;line-height:15.5px;color:#1b1b1b;letter-spacing:0.37px;-webkit-text-stroke:0.6px #1b1b1b;">Leanne Davies</span>
<span class="t" style="left:688.2px;top:203px;font-size:28.5px;line-height:28.5px;color:#000;letter-spacing:1.38px;-webkit-text-stroke:0.95px #000;">Contact Form</span>
<svg style="left:667px;top:258px" width="291" height="79" viewBox="0 0 291 79"><path d="M0.6 78 V0.6 H289 V78" fill="none" stroke="#dde5ee" stroke-width="1" stroke-dasharray="2 1.55"/></svg>
<span class="t" style="left:694.1px;top:273px;font-size:13px;line-height:13px;color:#2b3358;letter-spacing:0.48px;">Full Name</span>
<div class="abs" style="left:689px;top:295.5px;width:248.5px;height:32.5px;border:2px solid #353f8d;border-radius:4px;background:#fff"></div>
<div class="abs" style="left:667.5px;top:294.3px;width:151.5px;height:30px;background:#333"></div>
<svg style="left:679px;top:324px" width="22" height="12" viewBox="0 0 22 12"><path d="M0.4 0 H20.5 L10.4 10.2 Z" fill="#333"/></svg>
<span class="t" style="left:680.0px;top:304px;font-size:13px;line-height:13px;color:#fff;letter-spacing:-0.02px;word-spacing:0.05px;-webkit-text-stroke:0.3px #fff;">Card : Phone Number</span>
<svg style="left:667px;top:335px" width="291" height="275" viewBox="0 0 291 275"><rect x="0.6" y="0.8" width="288.4" height="271.6" fill="none" stroke="#9db9d6" stroke-width="1.3" stroke-dasharray="2 1.55"/></svg>
<div class="abs" style="left:667px;top:608.5px;width:290px;height:1px;border-top:1px dotted #c9d9ea"></div>
<span class="t" style="left:694.1px;top:350px;font-size:13px;line-height:13px;color:#2b3358;letter-spacing:0.68px;">Phone Number</span>
<div class="abs" style="left:689px;top:372.5px;width:248.5px;height:32.5px;border:2px solid #353f8d;border-radius:4px;background:#fff"></div>
<div class="abs" style="left:708px;top:441px;width:229px;height:2.2px;background:#7f7f7f"></div>
<svg style="left:689px;top:432px" width="23" height="23" viewBox="0 0 23 23"><circle cx="10.7" cy="10.4" r="8" fill="#fff" stroke="#1c2170" stroke-width="2.6"/></svg>
<span class="t" style="left:694.1px;top:491px;font-size:13px;line-height:13px;color:#333;letter-spacing:0.65px;">Phone Number Format</span>
<div class="abs" style="left:689px;top:515px;width:248.5px;height:33px;border:2px solid #2563a8;background:#fff"></div>
<span class="t" style="left:700.2px;top:526px;font-size:13px;line-height:13px;color:#111;letter-spacing:1.17px;-webkit-text-stroke:0.25px #111;">###-###-####</span>
<svg style="left:683px;top:509px" width="15" height="15" viewBox="0 0 15 15"><g transform="translate(0.3 0)"><circle cx="7" cy="7" r="4.8" fill="#fff" stroke="#5b9bd5" stroke-width="1.6"/></g></svg>
<svg style="left:683px;top:540px" width="15" height="15" viewBox="0 0 15 15"><g transform="translate(0.3 0.2)"><circle cx="7" cy="7" r="4.8" fill="#fff" stroke="#5b9bd5" stroke-width="1.6"/></g></svg>
<svg style="left:806px;top:509px" width="15" height="15" viewBox="0 0 15 15"><g transform="translate(0.4 0)"><circle cx="7" cy="7" r="4.8" fill="#fff" stroke="#5b9bd5" stroke-width="1.6"/></g></svg>
<svg style="left:806px;top:540px" width="15" height="15" viewBox="0 0 15 15"><g transform="translate(0.4 0.2)"><circle cx="7" cy="7" r="4.8" fill="#fff" stroke="#5b9bd5" stroke-width="1.6"/></g></svg>
<svg style="left:929px;top:509px" width="15" height="15" viewBox="0 0 15 15"><g transform="translate(0.4 0)"><circle cx="7" cy="7" r="4.8" fill="#fff" stroke="#5b9bd5" stroke-width="1.6"/></g></svg>
<svg style="left:929px;top:540px" width="15" height="15" viewBox="0 0 15 15"><g transform="translate(0.4 0.2)"><circle cx="7" cy="7" r="4.8" fill="#fff" stroke="#5b9bd5" stroke-width="1.6"/></g></svg>
<!-- bottom bar -->
<div class="abs" style="left:360px;top:810px;width:947px;height:16px;background:#f1f1f1"></div>
<div class="abs" style="left:376px;top:812px;width:771px;height:12.5px;background:#c1c1c1"></div>
<svg style="left:364px;top:814px" width="7" height="10" viewBox="0 0 7 10"><path d="M5 0.5 V8.5 L0.5 4.5 Z" fill="#a3a3a3"/></svg>
<svg style="left:1298px;top:814px" width="7" height="10" viewBox="0 0 7 10"><path d="M0.8 0.5 V8.5 L5.2 4.5 Z" fill="#505050"/></svg>
<div class="abs" style="left:360px;top:826px;width:947px;height:1px;background:#c8c6c4"></div>
<div class="abs" style="left:360px;top:827px;width:947px;height:39px;background:#f0f0f0"></div>
<svg style="left:360px;top:827px" width="348" height="40" viewBox="0 0 348 40"><path d="M0 0 H335 L345.5 20 L335 39 H0 Z" fill="#f8f8f8"/><path d="M44.5 0 L55.3 20 L44.5 39 M171.8 0 L182.5 20 L171.8 39 M334.7 0 L345.4 20 L334.7 39" fill="none" stroke="#e3e1df" stroke-width="1.2"/></svg>
<div class="abs" style="left:376.5px;top:847.3px;width:2px;height:2px;background:#323130"></div>
<div class="abs" style="left:383.5px;top:847.3px;width:2px;height:2px;background:#323130"></div>
<div class="abs" style="left:390.5px;top:847.3px;width:2px;height:2px;background:#323130"></div>
<svg style="left:426px;top:838px" width="20" height="20" viewBox="0 0 20 20"><g transform="translate(0.3 0.6)"><path d="M12 17.3 H1.2 V0.9 H9 L13.4 5.3 V8" fill="none" stroke="#484644" stroke-width="1.3"/><path d="M8.8 1 V5.6 H13.2" fill="none" stroke="#484644" stroke-width="1.1"/><path d="M3.6 8.6 H10 M3.6 11 H9 M3.6 13.4 H7" stroke="#605e5c" stroke-width="1.1"/><path d="M8.2 16.4 L9 13.6 L14.6 8 L17 10.4 L11.4 16 Z" fill="#49c0c0" stroke="#1f9a9a" stroke-width="1" stroke-linejoin="round"/></g></svg>
<span class="t" style="left:449.1px;top:842px;font-size:13.5px;line-height:13.5px;color:#323130;letter-spacing:-0.33px;">frm_Contact</span>
<svg style="left:552px;top:841px" width="20" height="15" viewBox="0 0 20 15"><g transform="translate(0.6 0)"><rect x="0.7" y="0.7" width="17" height="12.3" fill="#fafafa" stroke="#484644" stroke-width="1.3"/><rect x="2.8" y="3.3" width="9.5" height="1.6" fill="#a19f9d"/><rect x="3.3" y="6.6" width="11.8" height="3.6" fill="#f3f2f1" stroke="#8a8886" stroke-width="1"/></g></svg>
<span class="t" style="left:575.7px;top:842px;font-size:13.5px;line-height:13.5px;color:#323130;letter-spacing:-0.36px;">crd_PhoneNum...</span>
<svg style="left:714px;top:841px" width="20" height="15" viewBox="0 0 20 15"><g transform="translate(0.5 0.3)"><rect x="0.6" y="4.6" width="10.8" height="5.8" fill="#fdfdfd" stroke="#444" stroke-width="1.2"/><rect x="2.1" y="6.5" width="7" height="2" fill="#0a8a8a"/><path d="M15.1 4.6 H17.2 V10.4 H15.1" fill="#fdfdfd" stroke="#444" stroke-width="1.1"/><path d="M12.9 1.6 V13.4" stroke="#777" stroke-width="1.8" fill="none"/><path d="M10.3 1 Q12.3 1.1 12.9 2.4 Q13.5 1.1 15.5 1 M10.3 14 Q12.3 13.9 12.9 12.6 Q13.5 13.9 15.5 14" stroke="#666" stroke-width="1.1" fill="none"/></g></svg>
<span class="t" style="left:738.7px;top:842px;font-size:13.5px;line-height:13.5px;color:#323130;letter-spacing:-0.23px;">txt_PhoneNumb...</span>
<div class="abs" style="left:955px;top:846.3px;width:12px;height:1.6px;background:#bdbbb9"></div>
<div class="abs" style="left:985px;top:847.2px;width:176px;height:2px;background:#3b3a39"></div>
<div class="abs" style="left:1046.8px;top:839.8px;width:3.2px;height:14.6px;background:#484644"></div>
<div class="abs" style="left:1052.5px;top:844px;width:3px;height:9px;background:#484644"></div>
<svg style="left:1174px;top:840px" width="15" height="15" viewBox="0 0 15 15"><path d="M1 7 H13 M7 1 V13" stroke="#a19f9d" stroke-width="1.5" fill="none"/></svg>
<span class="t" style="left:1211.0px;top:843px;font-size:12.5px;line-height:12.5px;color:#605e5c;letter-spacing:-0.01px;">70</span>
<span class="t" style="left:1233.1px;top:843px;font-size:12.5px;line-height:12.5px;color:#605e5c;letter-spacing:-0.65px;">%</span>
<svg style="left:1269px;top:840px" width="19" height="17" viewBox="0 0 19 17"><path d="M2 14.2 L15.6 1.6 M9.6 1.3 H16 V7.2 M1.7 8.4 V14.5 H8.2" fill="none" stroke="#201f1e" stroke-width="1.3"/></svg>
</div>
</body>
</html>
